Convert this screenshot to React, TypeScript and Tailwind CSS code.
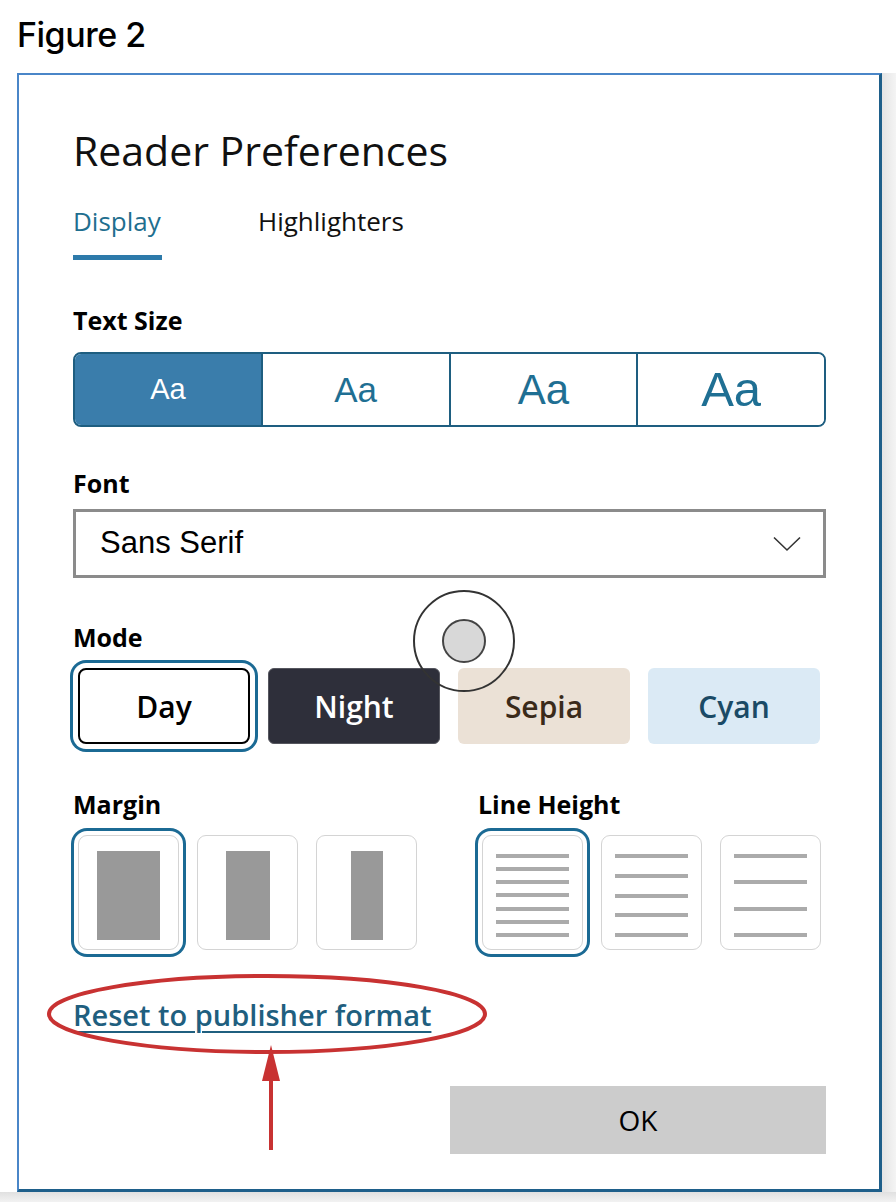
import React from "react";

const ui = "font-['Open_Sans','Noto_Sans',sans-serif]";

function TextSizeControl() {
  const sizes = ["text-[29px]", "text-[35px]", "text-[42px]", "text-[49px]"];
  return (
    <div className="flex h-[75px] w-[753px] overflow-hidden rounded-[8px] border-2 border-[#1e5e80]">
      {sizes.map((size, i) => (
        <div
          key={size}
          className={`flex flex-1 items-center justify-center ${
            i > 0 ? "border-l-2 border-[#1e5e80]" : ""
          } ${i === 0 ? "bg-[#3a7dab] text-white" : "bg-white text-[#1f6f93]"}`}
        >
          <span className={`${size} font-['Liberation_Sans',Arial,sans-serif] leading-none`}>Aa</span>
        </div>
      ))}
    </div>
  );
}

function ModeButtons() {
  return (
    <div className="ml-[5px] flex gap-[18px]">
      <button className="flex h-[76px] w-[172px] items-center justify-center rounded-[8px] border-2 border-black bg-white text-[30px] font-semibold text-black ring-[3px] ring-[#1b6a94] ring-offset-[5px]">
        Day
      </button>
      <button className="flex h-[76px] w-[172px] items-center justify-center rounded-[6px] border border-[#55565e] bg-[#2e2f3a] text-[30px] font-semibold text-white">
        Night
      </button>
      <button className="flex h-[76px] w-[172px] items-center justify-center rounded-[6px] bg-[#ebe1d6] text-[30px] font-semibold text-[#3a2a1a]">
        Sepia
      </button>
      <button className="flex h-[76px] w-[172px] items-center justify-center rounded-[6px] bg-[#dbeaf5] text-[30px] font-semibold text-[#1a4a66]">
        Cyan
      </button>
    </div>
  );
}

function OptionBox({ selected, children }: { selected?: boolean; children: React.ReactNode }) {
  return (
    <div
      className={`flex h-[115px] w-[101px] justify-center rounded-[9px] border border-[#d4d4d4] bg-white pt-[15px] ${
        selected ? "ring-[3px] ring-[#1b6a94] ring-offset-[4px]" : ""
      }`}
    >
      {children}
    </div>
  );
}

function MarginBoxes() {
  const widths = ["w-[63px]", "w-[44px]", "w-[32px]"];
  return (
    <div className="ml-[5px] flex gap-[18px]">
      {widths.map((w, i) => (
        <OptionBox key={w} selected={i === 0}>
          <div className={`h-[89px] ${w} bg-[#999999]`} />
        </OptionBox>
      ))}
    </div>
  );
}

function LineHeightBoxes() {
  const counts = [7, 5, 4];
  return (
    <div className="ml-[4px] flex gap-[18px]">
      {counts.map((n, i) => (
        <OptionBox key={n} selected={i === 0}>
          <div className="mt-[3px] flex h-[83px] w-[73px] flex-col justify-between">
            {Array.from({ length: n }).map((_, j) => (
              <div key={j} className="h-[4px] w-full bg-[#ababab]" />
            ))}
          </div>
        </OptionBox>
      ))}
    </div>
  );
}

export default function App() {
  return (
    <div className={`relative h-[1202px] w-[896px] overflow-hidden bg-white ${ui}`}>
      <div className="flex h-[73px] items-start pl-[17px] pt-[13px]">
        <span className="font-['Inter',sans-serif] text-[34px] font-medium leading-[44px] tracking-[-0.5px] text-black">
          Figure 2
        </span>
      </div>

      <div className="flex">
        <div className="ml-[17px] h-[1119px] w-[865px] border-b-[3px] border-l-2 border-r-[3px] border-t-2 border-b-[#1e5f8a] border-l-[#4a86c8] border-r-[#1e5f8a] border-t-[#4a86c8] bg-white pl-[54px]">
          <h1 className="mt-[51px] text-[41px] font-normal leading-[48px] text-[#111]">Reader Preferences</h1>

          <div className="mt-[30px] flex gap-[96px]">
            <div className="flex flex-col">
              <span className="text-[26px] leading-[34px] text-[#1f6f8f]">Display</span>
              <div className="mt-[17px] h-[5px] w-[89px] bg-[#2d7aaa]" />
            </div>
            <span className="text-[26px] leading-[34px] text-[#111]">Highlighters</span>
          </div>

          <div className="mt-[46px] text-[25px] font-bold leading-[28px] text-black">Text Size</div>
          <div className="mt-[18px]">
            <TextSizeControl />
          </div>

          <div className="mt-[42px] text-[25px] font-bold leading-[28px] text-black">Font</div>
          <div className="mt-[12px] flex h-[69px] w-[753px] items-center justify-between border-[3px] border-[#8b8b8b] pl-[24px] pr-[22px]">
            <span className="font-['Liberation_Sans',Arial,sans-serif] text-[31px] text-black">Sans Serif</span>
            <svg width="28" height="16" viewBox="0 0 28 16" fill="none" stroke="#333" strokeWidth="1.6">
              <path d="M1 1.5 L14 14 L27 1.5" />
            </svg>
          </div>

          <div className="mt-[45px] text-[25px] font-bold leading-[28px] text-black">Mode</div>
          <div className="mt-[17px]">
            <ModeButtons />
          </div>

          <div className="mt-[46px] flex">
            <div className="w-[405px]">
              <div className="text-[25px] font-bold leading-[28px] text-black">Margin</div>
              <div className="mt-[17px]">
                <MarginBoxes />
              </div>
            </div>
            <div>
              <div className="text-[25px] font-bold leading-[28px] text-black">Line Height</div>
              <div className="mt-[17px]">
                <LineHeightBoxes />
              </div>
            </div>
          </div>

          <div className="mt-[46px]">
            <a className="text-[29px] font-semibold leading-[38px] text-[#1f5f7f] underline decoration-[2px] underline-offset-[5px]">
              Reset to publisher format
            </a>
          </div>

          <div className="mt-[52px] flex w-[753px] justify-end">
            <button className="flex h-[68px] w-[376px] items-center justify-center bg-[#cccccc] text-[28px] text-black">
              OK
            </button>
          </div>
        </div>
        <div className="h-[1119px] flex-1 bg-gradient-to-r from-[#e4e4e4] to-[#f4f4f4]" />
      </div>
      <div className="h-[10px] bg-gradient-to-b from-[#e0e0e0] to-[#f2f2f2]" />

      {/* annotations */}
      <svg className="pointer-events-none absolute left-0 top-0" width="896" height="1202">
        <circle cx="464" cy="641" r="50" fill="none" stroke="#333" strokeWidth="2" />
        <circle cx="464" cy="641" r="21" fill="#d8d8d8" stroke="#444" strokeWidth="2" />
        <ellipse cx="267" cy="1014" rx="218" ry="38" fill="none" stroke="#c83232" strokeWidth="4" />
        <line x1="271" y1="1150" x2="271" y2="1075" stroke="#c83232" strokeWidth="4" />
        <polygon points="271,1045 262,1081 280,1081" fill="#c83232" />
      </svg>
    </div>
  );
}
